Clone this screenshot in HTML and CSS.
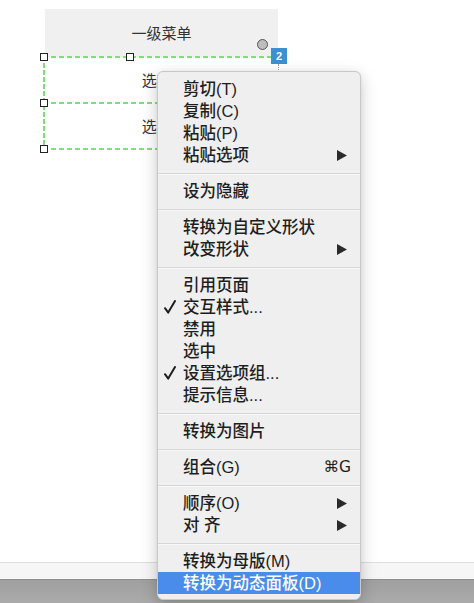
FILE: index.html
```html
<!DOCTYPE html>
<html lang="zh-CN">
<head>
<meta charset="utf-8">
<title>菜单</title>
<link rel="stylesheet" href="styles.css">
</head>
<body>
<div class="stage">
  <div class="canvas">
    <div class="widget">
      <div class="header">一级菜单</div>
      <div class="row">选项1</div>
      <div class="row">选项2</div>
      <div class="selection">
        <span class="dash top"></span>
        <span class="dash mid"></span>
        <span class="dash bottom"></span>
        <span class="dash left"></span>
      </div>
      <span class="handle h1"></span>
      <span class="handle h2"></span>
      <span class="handle h3"></span>
      <span class="handle h4"></span>
      <span class="knob"></span>
      <span class="badge">2</span>
      <span class="guide"></span>
    </div>
  </div>
  <div class="footer"><div class="footer-top"></div><div class="footer-bar"></div></div>

  <div class="menu">
    <div class="item">剪切(T)</div>
    <div class="item">复制(C)</div>
    <div class="item">粘贴(P)</div>
    <div class="item">粘贴选项<svg class="arrow" viewBox="0 0 10 11"><path d="M0 0L10 5.5L0 11Z"/></svg></div>
    <div class="sep"></div>
    <div class="item">设为隐藏</div>
    <div class="sep"></div>
    <div class="item">转换为自定义形状</div>
    <div class="item">改变形状<svg class="arrow" viewBox="0 0 10 11"><path d="M0 0L10 5.5L0 11Z"/></svg></div>
    <div class="sep"></div>
    <div class="item">引用页面</div>
    <div class="item"><svg class="check" viewBox="0 0 12 14"><path d="M1 8.2L4.2 12.6L11 1"/></svg>交互样式...</div>
    <div class="item">禁用</div>
    <div class="item">选中</div>
    <div class="item"><svg class="check" viewBox="0 0 12 14"><path d="M1 8.2L4.2 12.6L11 1"/></svg>设置选项组...</div>
    <div class="item">提示信息...</div>
    <div class="sep"></div>
    <div class="item">转换为图片</div>
    <div class="sep"></div>
    <div class="item">组合(G)<span class="key">⌘G</span></div>
    <div class="sep"></div>
    <div class="item">顺序(O)<svg class="arrow" viewBox="0 0 10 11"><path d="M0 0L10 5.5L0 11Z"/></svg></div>
    <div class="item">对 齐<svg class="arrow" viewBox="0 0 10 11"><path d="M0 0L10 5.5L0 11Z"/></svg></div>
    <div class="sep"></div>
    <div class="item">转换为母版(M)</div>
    <div class="item active">转换为动态面板(D)</div>
  </div>
</div>
</body>
</html>
```
FILE: styles.css
```css
* { box-sizing: border-box; }
html, body { margin: 0; padding: 0; background: #fff; }
body {
  font-family: "Liberation Sans", "Noto Sans CJK SC", sans-serif;
  color: #222;
  width: 474px;
  height: 603px;
  overflow: hidden;
}
.stage { position: relative; width: 474px; height: 603px; }
.canvas { height: 562px; padding: 9px 0 0 44px; }

.widget { position: relative; width: 234px; }
.header {
  height: 48px;
  margin-left: 1px;
  background: #f0f0f0;
  font-family: "Noto Sans CJK SC", sans-serif;
  font-size: 15px;
  line-height: 48px;
  text-align: center;
  color: #333;
}
.row {
  height: 46px;
  line-height: 46px;
  text-align: center;
  font-family: "Noto Sans CJK SC", sans-serif;
  font-size: 15px;
  color: #333;
}
.selection {
  position: absolute;
  left: -1px; top: 47px;
  width: 228px; height: 95px;
}
.dash { position: absolute; }
.dash.top, .dash.mid, .dash.bottom {
  left: 0; right: 0; height: 2px;
  background: repeating-linear-gradient(90deg, #7ae07a 0 5px, transparent 5px 8px);
}
.dash.top { top: 0; }
.dash.mid { top: 46px; }
.dash.bottom { top: 92px; }
.dash.left {
  left: 0; top: 0; bottom: 1px; width: 2px;
  background: repeating-linear-gradient(180deg, #7ae07a 0 5px, transparent 5px 7px);
}
.handle {
  position: absolute;
  width: 8px; height: 8px;
  background: #fff;
  border: 1.5px solid #222;
}
.h1 { left: -4px; top: 44px; }
.h2 { left: 82px; top: 44px; }
.h3 { left: -4px; top: 90px; }
.h4 { left: -4px; top: 136px; }
.knob {
  position: absolute;
  left: 213px; top: 30px;
  width: 11px; height: 11px;
  border-radius: 50%;
  background: #bdbdbd;
  border: 1.5px solid #555;
}
.badge {
  position: absolute;
  left: 227px; top: 39px;
  width: 16px; height: 16px;
  background: #3b8fd2;
  color: #fff;
  font-family: "Liberation Sans", sans-serif;
  font-weight: bold;
  font-size: 11px;
  line-height: 16px;
  text-align: center;
}
.guide {
  position: absolute;
  left: 234px; top: 55px;
  height: 8px;
  border-left: 1px dotted #9a9a9a;
}

.footer { height: 41px; }
.footer-top { height: 17px; border-top: 1px solid #dedede; background: #f6f6f6; }
.footer-bar { height: 24px; background: linear-gradient(#9f9f9f, #ababab); border-top: 1px solid #8f8f8f; }

.menu {
  position: absolute;
  left: 157px; top: 71px;
  width: 204px;
  padding: 6px 0 5px;
  background: #efefef;
  border: 1px solid #c9c9c9;
  border-radius: 6px;
  box-shadow: 0 5px 16px rgba(0,0,0,0.22), 0 0 2px rgba(0,0,0,0.08);
  font-size: 16.5px;
  font-weight: 500;
}
.item {
  position: relative;
  height: 22px;
  line-height: 22px;
  padding: 0 12px 0 25px;
  display: flex;
  align-items: center;
  justify-content: space-between;
  white-space: nowrap;
  color: #1e1e1e;
}
.item.active { background: #4a8ce9; color: #fff; }
.check {
  position: absolute;
  left: 6px; top: 4px;
  width: 12px; height: 14px;
  fill: none;
  stroke: #1e1e1e;
  stroke-width: 2;
  stroke-linecap: round;
  stroke-linejoin: round;
}
.arrow { width: 10px; height: 11px; fill: #2a2a2a; margin-right: 1px; }
.key {
  font-family: "DejaVu Sans", "Liberation Sans", sans-serif;
  font-size: 15.5px;
  margin-right: -3px;
}
.sep {
  height: 1px;
  margin: 7px 0 6px;
  background: #d7d7d7;
  box-shadow: 0 1px 0 #f8f8f8;
}
```
